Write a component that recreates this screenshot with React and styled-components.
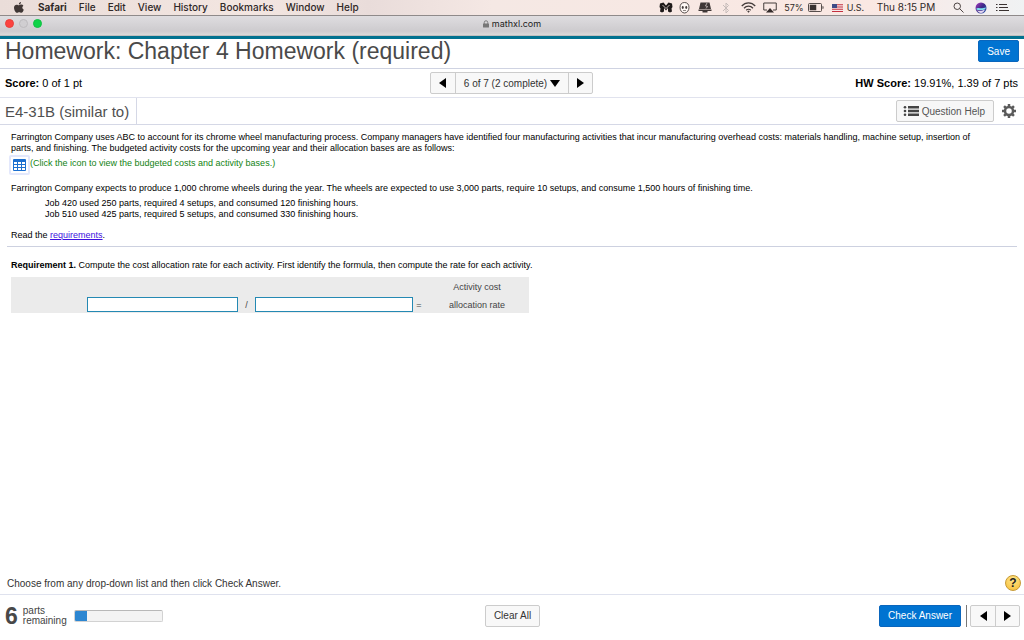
import React from 'react';
import styled, { createGlobalStyle } from 'styled-components';

const GlobalStyle = createGlobalStyle`
  * {
    box-sizing: border-box;
  }
  body {
    margin: 0;
    background: #fff;
    color: #111;
    font-family: 'Liberation Sans', Arial, Helvetica, sans-serif;
    font-size: 10px;
  }
  button,
  select {
    font-family: inherit;
    margin: 0;
    padding: 0;
  }
`;

const Page = styled.div`
  display: flex;
  flex-direction: column;
  min-height: 100vh;
`;

/* macOS menu bar */

const MenuBar = styled.div`
  display: flex;
  align-items: center;
  height: 16px;
  padding: 0 10px 0 14px;
  border-bottom: 1px solid #8f8a8a;
  background: linear-gradient(90deg, #eaddd9, #f3e6e1 25%, #e9dcda 36%, #f5e8e4 48%, #fae8e3 85%, #f4eeee 94%, #f0f2f3);
  color: #2f2827;
  font-family: Inter, 'Liberation Sans', sans-serif;
  font-size: 10px;
  line-height: 15px;
  white-space: nowrap;
`;

const Menus = styled.nav`
  display: flex;
  gap: 12px;
  align-items: center;
  margin-left: 14px;
`;

const MenuTitle = styled.span`
  font-weight: ${({ $app }) => ($app ? 700 : 500)};
`;

const StatusItems = styled.div`
  display: flex;
  align-items: center;
  margin-left: auto;
`;

const StatusItem = styled.span`
  display: flex;
  justify-content: center;
  align-items: center;
  gap: 4px;
  width: ${({ $width }) => $width}px;
`;

const SmallText = styled.span`
  font-size: 9px;
`;

/* Browser window */

const TitleBar = styled.div`
  display: flex;
  align-items: center;
  height: 20px;
  padding: 0 5px 4px;
  border-bottom: 1px solid #bfbfbf;
  background: linear-gradient(#dfdde0, #cdcbce 80%, #d9d9d9);
`;

const Lights = styled.div`
  display: flex;
  flex: 1;
  gap: 5px;
`;

const Light = styled.span`
  width: 9px;
  height: 9px;
  border: 1px solid ${({ $edge }) => $edge};
  border-radius: 50%;
  background: ${({ $fill }) => $fill};
`;

const Address = styled.div`
  display: flex;
  align-items: center;
  gap: 3px;
  color: #222;
  font-family: Inter, 'Liberation Sans', sans-serif;
  font-size: 9px;
  line-height: 15px;
`;

const Balance = styled.div`
  flex: 1;
`;

/* Homework header */

const TitleRow = styled.header`
  display: flex;
  justify-content: space-between;
  align-items: flex-start;
  height: 33px;
  padding: 1px 5px 0;
  border-top: 3px solid #00718f;
  border-bottom: 1px solid #cfd3e2;
`;

const Title = styled.h1`
  margin: 0;
  color: #4a4a4a;
  font-size: 23px;
  font-weight: 400;
  line-height: 22px;
`;

const PrimaryButton = styled.button`
  height: 22px;
  padding: 0 8px;
  border: 1px solid #0a66bd;
  border-radius: 2px;
  background: #0073d1;
  color: #fff;
  font-size: 10px;
`;

const ScoreRow = styled.div`
  display: grid;
  grid-template-columns: 1fr auto 1fr;
  align-items: center;
  height: 29px;
  padding: 0 6px 0 5px;
  border-bottom: 1px solid #e1e3ee;
  color: #000;
  font-size: 11px;
`;

const HomeworkScore = styled.div`
  text-align: right;
`;

const ButtonGroup = styled.div`
  display: flex;
  height: 22px;
  border: 1px solid #ccc;
  border-radius: 2px;
  background: #f8f8f8;
`;

const GroupButton = styled.button`
  display: flex;
  justify-content: center;
  align-items: center;
  gap: 3px;
  min-width: 24px;
  padding: 0 ${({ $wide }) => ($wide ? 8 : 0)}px;
  border: 0;
  background: none;
  color: #333;
  font-size: 10px;

  & + & {
    border-left: 1px solid #ccc;
  }
`;

const ExerciseRow = styled.div`
  display: flex;
  justify-content: space-between;
  align-items: stretch;
  height: 27px;
  border-bottom: 1px solid #d5d8e6;
`;

const ExerciseName = styled.h2`
  margin: 0;
  padding: 0 7px 0 5px;
  border-right: 1px solid #d5d8e6;
  color: #505050;
  font-size: 15px;
  font-weight: 400;
  line-height: 27px;
`;

const Tools = styled.div`
  display: flex;
  align-items: center;
  gap: 8px;
  padding-right: 8px;
`;

const HelpButton = styled.button`
  display: flex;
  align-items: center;
  gap: 3px;
  height: 22px;
  padding: 0 8px 0 6px;
  border: 1px solid #ccc;
  border-radius: 2px;
  background: #f7f7f7;
  color: #555;
  font-size: 10px;
`;

const IconButton = styled.button`
  display: flex;
  border: 0;
  background: none;
`;

/* Problem */

const Problem = styled.main`
  flex: 1;
  padding: 7px 7px 0 11px;
  color: #000;
  font-size: 9px;
  line-height: 11px;
`;

const Paragraph = styled.p`
  margin: 0;
`;

const DataLink = styled.div`
  display: flex;
  align-items: center;
  height: 18px;
  margin-bottom: 11px;
  color: #128312;
`;

const TableButton = styled.button`
  display: flex;
  justify-content: center;
  align-items: center;
  width: 21px;
  height: 20px;
  margin: 4px 0 0 -2px;
  border: 2px solid #e3e8fc;
  border-radius: 2px;
  background: #fff;
`;

const Jobs = styled.div`
  margin: 4px 0 10px 34px;
`;

const Link = styled.a`
  color: #3d10e0;
`;

const Divider = styled.hr`
  height: 1px;
  margin: 5px 0 13px -4px;
  border: 0;
  background: #cdd1e0;
`;

const Formula = styled.div`
  display: flex;
  align-items: flex-end;
  width: fit-content;
  height: 36px;
  margin-top: 6px;
  padding-left: 76px;
  background: #ebebeb;
  color: #444;
`;

const Choice = styled.select`
  width: ${({ $width }) => $width}px;
  height: 15px;
  margin-bottom: 1px;
  border: 1px solid #2489b3;
  border-radius: 0;
  background: #fff;
  appearance: none;
`;

const Operator = styled.span`
  width: ${({ $width }) => $width}px;
  padding-bottom: 2px;
  text-align: center;
`;

const Result = styled.div`
  width: 104px;
  height: 36px;
  padding-top: 1px;
  line-height: 18px;
  text-align: center;
`;

const Hint = styled.div`
  display: flex;
  justify-content: space-between;
  align-items: center;
  height: 22px;
  padding: 0 3px 0 7px;
  color: #333;
  font-size: 10px;
`;

/* Footer */

const Footer = styled.footer`
  display: grid;
  grid-template-columns: 1fr auto 1fr;
  align-items: center;
  height: 46px;
  padding: 0 4px 4px 5px;
  border-top: 1px solid #dfe2ee;
`;

const Progress = styled.div`
  display: flex;
  align-items: center;
`;

const Count = styled.strong`
  margin-right: 5px;
  color: #484848;
  font-size: 23px;
  line-height: 24px;
`;

const Remaining = styled.span`
  margin-right: 7px;
  color: #444;
  font-size: 10px;
  line-height: 10px;
`;

const Track = styled.div`
  width: 89px;
  height: 12px;
  overflow: hidden;
  border: 1px solid #d2d2d2;
  border-top-color: #b8b8b8;
  border-radius: 2px;
  background: #f3f3f3;
`;

const Bar = styled.div`
  height: 100%;
  background: #2c86d1;
`;

const ClearButton = styled.button`
  height: 22px;
  padding: 0 8px;
  border: 1px solid #ccc;
  border-radius: 2px;
  background: #f8f8f8;
  color: #333;
  font-size: 10px;
`;

const Actions = styled.div`
  display: flex;
  justify-content: flex-end;
  align-items: center;
`;

const Separator = styled.span`
  width: 1px;
  height: 22px;
  margin: 0 3px 0 5px;
  background: #777;
`;

const AppleIcon = () => (
  <svg width="10" height="11" viewBox="0 0 20 22" fill="#403735">
    <path d="M14 0c.2 2.600-1.800 5-4.300 5C9.500 2.600 11.600.3 14 0zM18.800 7.600c-3.200 2-2.900 6.300.8 7.800-1 3-3 6.300-5 6.300-1.700 0-2.200-1-4.200-1s-2.600 1-4.200 1C3.600 21.700 0 15.800 0 11.300 0 7.400 2.600 5.300 5.200 5.300c1.900 0 3.300 1.200 4.600 1.200 1.200 0 2.900-1.300 5.200-1.300 1.500 0 2.900.8 3.800 2.400z" />
  </svg>
);

const MIcon = () => (
  <svg width="14" height="11" viewBox="0 0 28 22">
    <path d="M2 3l7-2 5 6 5-6 7 2 1 7-2 3 1 6-4 2-4-2v-7l-4 5-4-5v7l-4 2-4-2 1-6-2-3z" fill="#1f1a1a" />
    <path d="M7 6l7 7 7-7" stroke="#f5e8e4" strokeWidth="1.500" fill="none" />
  </svg>
);

const FaceIcon = () => (
  <svg width="11" height="12" viewBox="0 0 20 24">
    <path d="M10 1C4 1 1 5 1 11s4 11 9 11 9-5 9-11S16 1 10 1z" fill="#fff8f5" stroke="#443c3b" strokeWidth="1.800" />
    <ellipse cx="6.500" cy="11" rx="2" ry="2.800" fill="#443c3b" />
    <ellipse cx="13.500" cy="11" rx="2" ry="2.800" fill="#443c3b" />
    <path d="M7 17h6" stroke="#443c3b" strokeWidth="1.200" />
  </svg>
);

const DisplayIcon = () => (
  <svg width="14" height="11" viewBox="0 0 28 22" fill="#3f3736">
    <path d="M5 1h18l3 13H2z" />
    <path d="M1 15h26v3H1zM9 18h10v3H9z" />
    <path d="M18 2l-3 6 4 1-3 4" stroke="#d8ccca" strokeWidth="1.500" fill="none" />
  </svg>
);

const BluetoothIcon = () => (
  <svg width="8" height="12" viewBox="0 0 16 24" fill="none" stroke="#c5bbb9" strokeWidth="2">
    <path d="M2 6l11 11-5 5V2l5 5L2 18" />
  </svg>
);

const WifiIcon = () => (
  <svg width="15" height="11" viewBox="0 0 30 22" fill="none" stroke="#443c3b" strokeWidth="2.400">
    <path d="M1.500 8C9-.5 21-.5 28.500 8M6 12.500c5-5.500 13-5.500 18 0M10.500 16.500c2.500-2.700 6.500-2.700 9 0" />
    <path d="M15 17l2.500 2L15 21.500 12.500 19z" fill="#443c3b" stroke="none" />
  </svg>
);

const AirplayIcon = () => (
  <svg width="14" height="11" viewBox="0 0 28 22">
    <path d="M8 16H1.500V2h25v14H20" fill="none" stroke="#443c3b" strokeWidth="2" />
    <path d="M14 12l8 9H6z" fill="#332b2a" />
  </svg>
);

const BatteryIcon = () => (
  <svg width="16" height="9" viewBox="0 0 32 18">
    <rect x="1" y="1" width="26" height="16" rx="2" fill="none" stroke="#443c3b" strokeWidth="1.800" />
    <rect x="3.500" y="3.500" width="13" height="11" fill="#3a3231" />
    <path d="M29 6v6l2-1V7z" fill="#443c3b" />
  </svg>
);

const FlagIcon = () => (
  <svg width="11" height="8" viewBox="0 0 22 16">
    <rect width="22" height="16" fill="#f3e9ea" />
    <path d="M0 1.500h22M0 6h22M0 10.500h22M0 15h22" stroke="#c5303f" strokeWidth="2.200" />
    <rect width="10" height="8" fill="#3c4a86" />
  </svg>
);

const SearchIcon = () => (
  <svg width="11" height="11" viewBox="0 0 22 22" fill="none" stroke="#4c4443" strokeWidth="2">
    <circle cx="8.500" cy="8.500" r="6.500" />
    <path d="M13 13l8 8" />
  </svg>
);

const SiriIcon = () => (
  <svg width="12" height="12" viewBox="0 0 24 24">
    <defs>
      <linearGradient id="siri" x1="0" y1="0" x2="1" y2="1">
        <stop offset="0" stopColor="#b13cc4" />
        <stop offset="0.500" stopColor="#3a2a86" />
        <stop offset="1" stopColor="#2a5fb4" />
      </linearGradient>
    </defs>
    <circle cx="12" cy="12" r="11" fill="url(#siri)" />
    <path d="M2 14c5-5 9 1 20-3-1 4-5 5-9 5s-7 1-11-2z" fill="#7fe0ee" />
    <path d="M4 17c6 1 11 1 16-2-2 5-5 7-8 7s-6-2-8-5z" fill="#e7d8f2" />
  </svg>
);

const ListIcon = () => (
  <svg width="13" height="9" viewBox="0 0 26 18" stroke="#3a3231" strokeWidth="2.400">
    <path d="M0 3h3M6 3h16M0 9h3M6 9h18M0 15h3M6 15h20" />
  </svg>
);

const LockIcon = () => (
  <svg width="6" height="8" viewBox="0 0 12 16">
    <rect y="7" width="12" height="8" rx="1" fill="#777" />
    <path d="M2.500 8V5a3.500 3.500 0 0 1 7 0v3" fill="none" stroke="#777" strokeWidth="1.800" />
  </svg>
);

const LeftArrow = () => (
  <svg width="7" height="10" viewBox="0 0 7 10">
    <path d="M7 0v10L0 5z" fill="#000" />
  </svg>
);

const RightArrow = () => (
  <svg width="7" height="10" viewBox="0 0 7 10">
    <path d="M0 0v10l7-5z" fill="#000" />
  </svg>
);

const DownArrow = () => (
  <svg width="10" height="7" viewBox="0 0 10 7">
    <path d="M0 0h10L5 7z" fill="#000" />
  </svg>
);

const HelpListIcon = () => (
  <svg width="16" height="10" viewBox="0 0 16 10" fill="#444">
    <path d="M5 0h11v2.600H5zM5 3.700h11v2.600H5zM5 7.400h11V10H5z" />
    <circle cx="2" cy="1.300" r="1.300" />
    <circle cx="2" cy="5" r="1.300" />
    <circle cx="2" cy="8.700" r="1.300" />
  </svg>
);

const GearIcon = () => (
  <svg width="14" height="14" viewBox="0 0 28 28" fill="none" stroke="#5b5b5b">
    <circle cx="14" cy="14" r="8" strokeWidth="5" />
    <path
      d="M14 0v5M14 23v5M0 14h5M23 14h5M4.100 4.100l3.500 3.500M20.400 20.400l3.500 3.500M4.100 23.900l3.500-3.500M20.400 7.600l3.500-3.500"
      strokeWidth="5"
    />
  </svg>
);

const TableIcon = () => (
  <svg width="13" height="12" viewBox="0 0 13 12">
    <rect width="13" height="12" rx="1" fill="#1b6fd0" />
    <path
      d="M1 3h3v2H1zM5 3h3v2H5zM9 3h3v2H9zM1 6h3v2H1zM5 6h3v2H5zM9 6h3v2H9zM1 9h3v2H1zM5 9h3v2H5zM9 9h3v2H9z"
      fill="#fff"
    />
  </svg>
);

const HelpBadge = styled.button`
  width: 16px;
  height: 16px;
  border: 1px solid #c79a35;
  border-radius: 50%;
  background: radial-gradient(circle at 50% 25%, #ffe68a, #f7bd35);
  color: #222;
  font-size: 12px;
  font-weight: 700;
  line-height: 14px;
`;

const menus = ['File', 'Edit', 'View', 'History', 'Bookmarks', 'Window', 'Help'];

const SystemBar = () => (
  <MenuBar>
    <AppleIcon />
    <Menus>
      <MenuTitle $app>Safari</MenuTitle>
      {menus.map(menu => (
        <MenuTitle key={menu}>{menu}</MenuTitle>
      ))}
    </Menus>
    <StatusItems>
      <StatusItem $width={16}>
        <MIcon />
      </StatusItem>
      <StatusItem $width={20}>
        <FaceIcon />
      </StatusItem>
      <StatusItem $width={22}>
        <DisplayIcon />
      </StatusItem>
      <StatusItem $width={20}>
        <BluetoothIcon />
      </StatusItem>
      <StatusItem $width={24}>
        <WifiIcon />
      </StatusItem>
      <StatusItem $width={20}>
        <AirplayIcon />
      </StatusItem>
      <StatusItem $width={48}>
        <SmallText>57%</SmallText>
        <BatteryIcon />
      </StatusItem>
      <StatusItem $width={40}>
        <FlagIcon />
        <SmallText>U.S.</SmallText>
      </StatusItem>
      <StatusItem $width={76}>Thu 8:15 PM</StatusItem>
      <StatusItem $width={28}>
        <SearchIcon />
      </StatusItem>
      <StatusItem $width={18}>
        <SiriIcon />
      </StatusItem>
      <StatusItem $width={24}>
        <ListIcon />
      </StatusItem>
    </StatusItems>
  </MenuBar>
);

const BrowserBar = () => (
  <TitleBar>
    <Lights>
      <Light $fill="#fc4340" $edge="#e8403c" />
      <Light $fill="#d0ced1" $edge="#bdbbbe" />
      <Light $fill="#0fd348" $edge="#12c044" />
    </Lights>
    <Address>
      <LockIcon />
      mathxl.com
    </Address>
    <Balance />
  </TitleBar>
);

const HomeworkHeader = () => (
  <>
    <TitleRow>
      <Title>Homework: Chapter 4 Homework (required)</Title>
      <PrimaryButton type="button">Save</PrimaryButton>
    </TitleRow>
    <ScoreRow>
      <div>
        <strong>Score:</strong> 0 of 1 pt
      </div>
      <ButtonGroup>
        <GroupButton type="button" aria-label="Previous question">
          <LeftArrow />
        </GroupButton>
        <GroupButton type="button" $wide>
          6 of 7 (2 complete)
          <DownArrow />
        </GroupButton>
        <GroupButton type="button" aria-label="Next question">
          <RightArrow />
        </GroupButton>
      </ButtonGroup>
      <HomeworkScore>
        <strong>HW Score:</strong> 19.91%, 1.39 of 7 pts
      </HomeworkScore>
    </ScoreRow>
    <ExerciseRow>
      <ExerciseName>E4-31B (similar to)</ExerciseName>
      <Tools>
        <HelpButton type="button">
          <HelpListIcon />
          Question Help
        </HelpButton>
        <IconButton type="button" aria-label="Settings">
          <GearIcon />
        </IconButton>
      </Tools>
    </ExerciseRow>
  </>
);

const ProblemText = () => (
  <Problem>
    <Paragraph>
      Farrington Company uses ABC to account for its chrome wheel manufacturing process. Company
      managers have identified four manufacturing activities that incur manufacturing overhead
      costs: materials handling, machine setup, insertion of
      <br />
      parts, and finishing. The budgeted activity costs for the upcoming year and their allocation
      bases are as follows:
    </Paragraph>
    <DataLink>
      <TableButton type="button" aria-label="View data table">
        <TableIcon />
      </TableButton>
      (Click the icon to view the budgeted costs and activity bases.)
    </DataLink>
    <Paragraph>
      Farrington Company expects to produce 1,000 chrome wheels during the year. The wheels are
      expected to use 3,000 parts, require 10 setups, and consume 1,500 hours of finishing time.
    </Paragraph>
    <Jobs>
      <Paragraph>Job 420 used 250 parts, required 4 setups, and consumed 120 finishing hours.</Paragraph>
      <Paragraph>Job 510 used 425 parts, required 5 setups, and consumed 330 finishing hours.</Paragraph>
    </Jobs>
    <Paragraph>
      Read the <Link href="#requirements">requirements</Link>.
    </Paragraph>
    <Divider />
    <Paragraph>
      <strong>Requirement 1.</strong> Compute the cost allocation rate for each activity. First
      identify the formula, then compute the rate for each activity.
    </Paragraph>
    <Formula>
      <Choice $width={151} aria-label="Numerator" />
      <Operator $width={17}>/</Operator>
      <Choice $width={158} aria-label="Denominator" />
      <Operator $width={12}>=</Operator>
      <Result>
        Activity cost
        <br />
        allocation rate
      </Result>
    </Formula>
  </Problem>
);

const parts = { done: 1, total: 7 };

const App = () => (
  <Page>
    <GlobalStyle />
    <SystemBar />
    <BrowserBar />
    <HomeworkHeader />
    <ProblemText />
    <Hint>
      Choose from any drop-down list and then click Check Answer.
      <HelpBadge type="button" aria-label="Help">
        ?
      </HelpBadge>
    </Hint>
    <Footer>
      <Progress>
        <Count>{parts.total - parts.done}</Count>
        <Remaining>
          parts
          <br />
          remaining
        </Remaining>
        <Track>
          <Bar style={{ width: `${(parts.done / parts.total) * 100}%` }} />
        </Track>
      </Progress>
      <ClearButton type="button">Clear All</ClearButton>
      <Actions>
        <PrimaryButton type="button">Check Answer</PrimaryButton>
        <Separator />
        <ButtonGroup>
          <GroupButton type="button" aria-label="Previous part">
            <LeftArrow />
          </GroupButton>
          <GroupButton type="button" aria-label="Next part">
            <RightArrow />
          </GroupButton>
        </ButtonGroup>
      </Actions>
    </Footer>
  </Page>
);

export default App;
